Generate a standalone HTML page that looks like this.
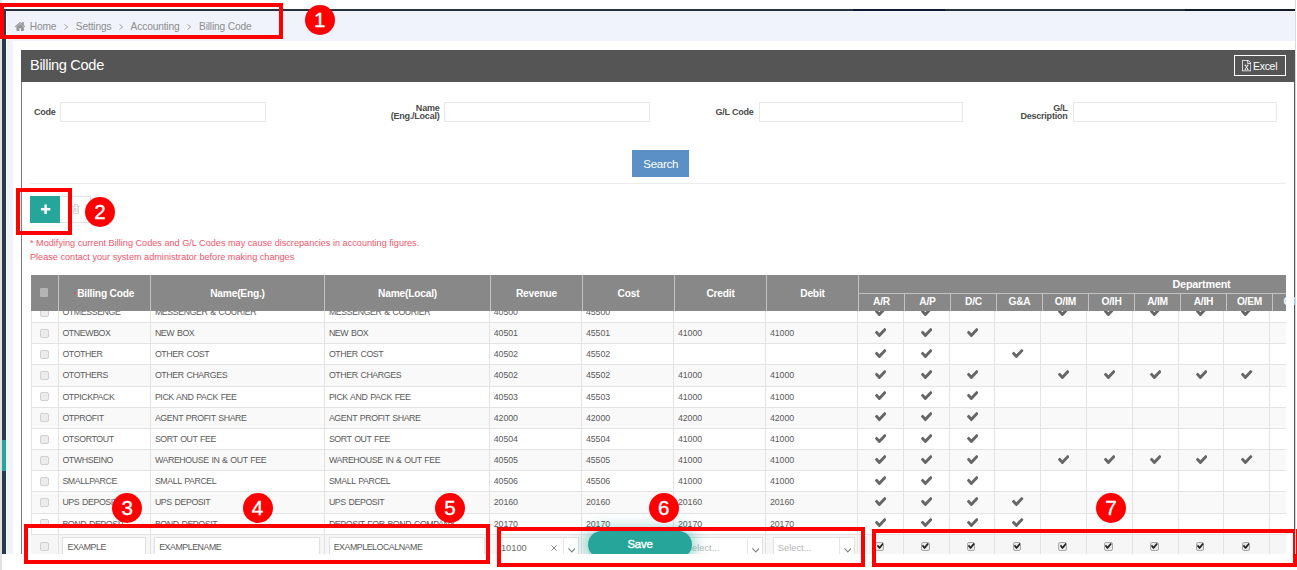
<!DOCTYPE html>
<html><head><meta charset="utf-8"><title>Billing Code</title>
<style>
html,body{margin:0;padding:0}
body{width:1297px;height:570px;position:relative;overflow:hidden;background:#fff;font-family:"Liberation Sans",sans-serif;}
.a{position:absolute}
#app{position:absolute;left:0;top:0;width:1297px;height:554px;overflow:hidden}
.t{position:absolute;white-space:nowrap;line-height:1}
.bc{font-size:10.2px;letter-spacing:-0.15px;color:#8d8d8d;top:22px}
.lbl{font-size:9px;letter-spacing:-0.22px;font-weight:bold;color:#4a4a4a;line-height:8.5px;text-align:right}
.inp{position:absolute;box-sizing:border-box;border:1px solid #e8e8e8;background:#fff;height:19.5px;top:102px}
.th{position:absolute;color:#fff;font-weight:bold;font-size:10.2px;letter-spacing:-0.2px;text-align:center;white-space:nowrap;line-height:1}
.row{position:absolute;left:30.5px;width:1255.5px;height:21.17px;box-sizing:border-box;border-bottom:1px solid #e3e3e3}
.c{position:absolute;top:0;height:21.17px;font-size:8.8px;letter-spacing:-0.4px;word-spacing:0.7px;color:#5a5a5a;line-height:21px;white-space:nowrap;overflow:hidden}
.vl{position:absolute;width:1px;background:#e3e3e3}
.cb{position:absolute;box-sizing:border-box;width:9px;height:9px;border:1px solid #cfcfcf;border-radius:2px;background:#ececec}
.einp{position:absolute;box-sizing:border-box;border:1px solid #e0e0e0;background:#fff;top:537.3px;height:22px;font-size:8.8px;letter-spacing:-0.45px;color:#5a5a5a;line-height:18.5px;padding-left:4.2px;white-space:nowrap}
.sel{position:absolute;box-sizing:border-box;border:1px solid #e0e0e0;background:#fff;top:537.3px;height:22px;font-size:9.3px;color:#b5b5b5;line-height:20px;white-space:nowrap}
.rr{position:absolute;box-sizing:border-box;border:4px solid #ff0000}
.circ{position:absolute;width:30px;height:30px;border-radius:50%;background:#ff0000;color:#fff;font-weight:normal;-webkit-text-stroke:0.35px #fff;font-size:20.6px;line-height:30.4px;text-align:center}
</style></head><body>
<div class="a" style="left:0;top:0;width:1.7px;height:570px;background:#e2e2e2"></div>
<div id="app">

<div class="a" style="left:6.6px;top:11px;width:1288.4px;height:543px;background:#f0f3fb"></div>
<div class="a" style="left:2px;top:9.2px;width:1293px;height:1.6px;background:#27313f"></div>
<div class="a" style="left:853px;top:9px;width:92px;height:2px;background:#0f1a33"></div>
<div class="a" style="left:1185px;top:9px;width:110px;height:2px;background:#131c2c"></div>
<div class="a" style="left:1.9px;top:9px;width:3.7px;height:545px;background:#2c394c"></div>
<div class="a" style="left:1.9px;top:440px;width:3.7px;height:31px;background:#26a69a"></div>
<div class="a" style="left:1295px;top:0;width:1.2px;height:554px;background:#dadada;z-index:3"></div>
<svg style="position:absolute;left:15px;top:21.7px;width:10.3px;height:8.9px;" viewBox="90 253 1612 1283" preserveAspectRatio="none"><path fill="#969696" d="M1472 992v480q0 26-19 45t-45 19h-384v-384h-256v384h-384q-26 0-45-19t-19-45v-480q0-1 .5-3t.5-3l575-474 575 474q1 2 1 6zm223-69l-62 74q-8 9-21 11h-3q-13 0-21-7l-692-577-692 577q-12 8-24 7-13-2-21-11l-62-74q-8-10-7-23.500t11-21.500l719-599q32-26 76-26t76 26l244 204v-195q0-14 9-23t23-9h192q14 0 23 9t9 23v408l219 182q10 8 11 21.500t-7 23.500z"/></svg>
<div class="t bc" style="left:29.7px">Home</div>
<svg class="a" style="left:63.9px;top:24px;width:4.4px;height:5.8px" viewBox="0 0 4.4 5.8"><path d="M0.5 0.3L3.7 2.9L0.5 5.5" stroke="#999" stroke-width="0.9" fill="none"/></svg>
<div class="t bc" style="left:75.8px">Settings</div>
<svg class="a" style="left:118.5px;top:24px;width:4.4px;height:5.8px" viewBox="0 0 4.4 5.8"><path d="M0.5 0.3L3.7 2.9L0.5 5.5" stroke="#999" stroke-width="0.9" fill="none"/></svg>
<div class="t bc" style="left:130.6px">Accounting</div>
<svg class="a" style="left:187.3px;top:24px;width:4.4px;height:5.8px" viewBox="0 0 4.4 5.8"><path d="M0.5 0.3L3.7 2.9L0.5 5.5" stroke="#999" stroke-width="0.9" fill="none"/></svg>
<div class="t bc" style="left:199px">Billing Code</div>
<div class="a" style="left:13px;top:41px;width:1284px;height:520px;background:#fff"></div>
<div class="a" style="left:21px;top:50px;width:1274px;height:520px;box-sizing:border-box;border:1px solid #555;border-left-color:#7a7a7a;background:#fff"></div>
<div class="a" style="left:21px;top:50px;width:1274px;height:32px;background:#555"></div>
<div class="t" style="left:30px;top:57.5px;font-size:14.6px;letter-spacing:-0.33px;color:#fff">Billing Code</div>
<div class="a" style="left:1234px;top:55px;width:52px;height:21px;box-sizing:border-box;border:1px solid #fff"></div>
<svg style="position:absolute;left:1242px;top:60.3px;width:9.2px;height:11.3px;" viewBox="128 0 1536 1792" preserveAspectRatio="none"><path fill="#fff" d="M1596 380q28 28 48 76t20 88v1152q0 40-28 68t-68 28h-1344q-40 0-68-28t-28-68v-1600q0-40 28-68t68-28h896q40 0 88 20t76 48zm-444-244v376h376q-10-29-22-41l-313-313q-12-12-41-22zm384 1528v-1024h-416q-40 0-68-28t-28-68v-416h-768v1536h1280zm-979-234v106h281v-106h-75l103-161q5-7 10-16.500t7.500-13.500 3.500-4h2q1 4 5 10 2 4 4.500 7.500t6 8 6.500 8.500l107 161h-76v106h291v-106h-68l-192-273 195-282h67v-107h-279v107h74l-103 159q-4 7-10 16.500t-9 13.500l-2 3h-2q-1-4-5-10-6-11-17-23l-106-159h76v-107h-290v107h68l189 272-194 283h-68z"/></svg>
<div class="t" style="left:1253px;top:60.7px;font-size:10.5px;letter-spacing:-0.3px;color:#fff">Excel</div>
<div class="t lbl" style="left:34px;top:108px;text-align:left">Code</div>
<div class="inp" style="left:60px;width:205.5px"></div>
<div class="t lbl" style="left:340px;width:99.5px;top:103.5px">Name<br>(Eng./Local)</div>
<div class="inp" style="left:444px;width:206px"></div>
<div class="t lbl" style="left:654px;width:99.5px;top:108px">G/L Code</div>
<div class="inp" style="left:758.5px;width:204.5px"></div>
<div class="t lbl" style="left:968px;width:99.5px;top:103.5px">G/L<br>Description</div>
<div class="inp" style="left:1072.5px;width:204.5px"></div>
<div class="a" style="left:632px;top:150.4px;width:57px;height:26.6px;background:#5b90c6"></div>
<div class="t" style="left:632px;width:57.5px;text-align:center;top:158px;font-size:11.6px;letter-spacing:-0.3px;color:#fff">Search</div>
<div class="a" style="left:30px;top:183px;width:1256px;height:1px;background:#ececec"></div>
<div class="a" style="left:60px;top:196px;width:31px;height:26.5px;box-sizing:border-box;border:1px solid #e2e2e2;border-left:0;background:#fff"></div>
<svg style="position:absolute;left:72.2px;top:204px;width:7.6px;height:10px;" viewBox="192 128 1408 1536" preserveAspectRatio="none"><path fill="#c6c6c6" d="M704 736v576q0 14-9 23t-23 9h-64q-14 0-23-9t-9-23v-576q0-14 9-23t23-9h64q14 0 23 9t9 23zm256 0v576q0 14-9 23t-23 9h-64q-14 0-23-9t-9-23v-576q0-14 9-23t23-9h64q14 0 23 9t9 23zm256 0v576q0 14-9 23t-23 9h-64q-14 0-23-9t-9-23v-576q0-14 9-23t23-9h64q14 0 23 9t9 23zm128 724v-948h-896v948q0 22 7 40.500t14.500 27 10.500 8.500h832q3 0 10.500-8.500t14.500-27 7-40.500zm-672-1076h448l-48-117q-7-9-17-11h-317q-10 2-17 11zm928 32v64q0 14-9 23t-23 9h-96v948q0 83-47 143.500t-113 60.500h-832q-66 0-113-58.500t-47-141.500v-952h-96q-14 0-23-9t-9-23v-64q0-14 9-23t23-9h309l70-167q15-37 54-63t79-26h320q40 0 79 26t54 63l70 167h309q14 0 23 9t9 23z"/></svg>
<div class="a" style="left:30px;top:196px;width:30px;height:26.5px;background:#26a69a"></div>
<svg class="a" style="left:38px;top:202px;width:15px;height:15px" viewBox="0 0 15 15"><path d="M2.9 7.2H12.3M7.6 2.5V11.9" stroke="#fff" stroke-width="2.5" fill="none"/></svg>
<div class="t" style="left:30px;top:239px;font-size:9.13px;color:#f2566b">* Modifying current Billing Codes and G/L Codes may cause discrepancies in accounting figures.</div>
<div class="t" style="left:30px;top:253px;font-size:9.13px;color:#f2566b">Please contact your system administrator before making changes</div>
<div class="row" style="top:301.93px;background:#fff">
<div class="cb" style="left:9.2px;top:5.7px"></div>
<div class="c" style="left:31.9px;width:87.3px">OTMESSENGE</div>
<div class="c" style="left:124.4px;width:168.8px">MESSENGER &amp; COURIER</div>
<div class="c" style="left:298.4px;width:159.7px">MESSENGER &amp; COURIER</div>
<div class="c" style="left:463.3px;width:87.0px;letter-spacing:-0.1px">40500</div>
<div class="c" style="left:555.5px;width:86.8px;letter-spacing:-0.1px">45500</div>
<svg style="position:absolute;left:844.5px;top:4.6px;width:11.4px;height:9.2px;" viewBox="121 334 1550 1188" preserveAspectRatio="none"><path fill="#666" d="M1671 566q0 40-28 68l-724 724-136 136q-28 28-68 28t-68-28l-136-136-362-362q-28-28-28-68t28-68l136-136q28-28 68-28t68 28l294 295 656-657q28-28 68-28t68 28l136 136q28 28 28 68z"/></svg>
<svg style="position:absolute;left:890.2px;top:4.6px;width:11.4px;height:9.2px;" viewBox="121 334 1550 1188" preserveAspectRatio="none"><path fill="#666" d="M1671 566q0 40-28 68l-724 724-136 136q-28 28-68 28t-68-28l-136-136-362-362q-28-28-28-68t28-68l136-136q28-28 68-28t68 28l294 295 656-657q28-28 68-28t68 28l136 136q28 28 28 68z"/></svg>
<svg style="position:absolute;left:1027.6px;top:4.6px;width:11.4px;height:9.2px;" viewBox="121 334 1550 1188" preserveAspectRatio="none"><path fill="#666" d="M1671 566q0 40-28 68l-724 724-136 136q-28 28-68 28t-68-28l-136-136-362-362q-28-28-28-68t28-68l136-136q28-28 68-28t68 28l294 295 656-657q28-28 68-28t68 28l136 136q28 28 28 68z"/></svg>
<svg style="position:absolute;left:1073.4px;top:4.6px;width:11.4px;height:9.2px;" viewBox="121 334 1550 1188" preserveAspectRatio="none"><path fill="#666" d="M1671 566q0 40-28 68l-724 724-136 136q-28 28-68 28t-68-28l-136-136-362-362q-28-28-28-68t28-68l136-136q28-28 68-28t68 28l294 295 656-657q28-28 68-28t68 28l136 136q28 28 28 68z"/></svg>
<svg style="position:absolute;left:1119.2px;top:4.6px;width:11.4px;height:9.2px;" viewBox="121 334 1550 1188" preserveAspectRatio="none"><path fill="#666" d="M1671 566q0 40-28 68l-724 724-136 136q-28 28-68 28t-68-28l-136-136-362-362q-28-28-28-68t28-68l136-136q28-28 68-28t68 28l294 295 656-657q28-28 68-28t68 28l136 136q28 28 28 68z"/></svg>
<svg style="position:absolute;left:1165.0px;top:4.6px;width:11.4px;height:9.2px;" viewBox="121 334 1550 1188" preserveAspectRatio="none"><path fill="#666" d="M1671 566q0 40-28 68l-724 724-136 136q-28 28-68 28t-68-28l-136-136-362-362q-28-28-28-68t28-68l136-136q28-28 68-28t68 28l294 295 656-657q28-28 68-28t68 28l136 136q28 28 28 68z"/></svg>
<svg style="position:absolute;left:1210.8px;top:4.6px;width:11.4px;height:9.2px;" viewBox="121 334 1550 1188" preserveAspectRatio="none"><path fill="#666" d="M1671 566q0 40-28 68l-724 724-136 136q-28 28-68 28t-68-28l-136-136-362-362q-28-28-28-68t28-68l136-136q28-28 68-28t68 28l294 295 656-657q28-28 68-28t68 28l136 136q28 28 28 68z"/></svg>
</div>
<div class="row" style="top:323.10px;background:#f9f9f9">
<div class="cb" style="left:9.2px;top:5.7px"></div>
<div class="c" style="left:31.9px;width:87.3px">OTNEWBOX</div>
<div class="c" style="left:124.4px;width:168.8px">NEW BOX</div>
<div class="c" style="left:298.4px;width:159.7px">NEW BOX</div>
<div class="c" style="left:463.3px;width:87.0px;letter-spacing:-0.1px">40501</div>
<div class="c" style="left:555.5px;width:86.8px;letter-spacing:-0.1px">45501</div>
<div class="c" style="left:647.5px;width:86.8px;letter-spacing:-0.1px">41000</div>
<div class="c" style="left:739.5px;width:86.8px;letter-spacing:-0.1px">41000</div>
<svg style="position:absolute;left:844.5px;top:4.6px;width:11.4px;height:9.2px;" viewBox="121 334 1550 1188" preserveAspectRatio="none"><path fill="#666" d="M1671 566q0 40-28 68l-724 724-136 136q-28 28-68 28t-68-28l-136-136-362-362q-28-28-28-68t28-68l136-136q28-28 68-28t68 28l294 295 656-657q28-28 68-28t68 28l136 136q28 28 28 68z"/></svg>
<svg style="position:absolute;left:890.2px;top:4.6px;width:11.4px;height:9.2px;" viewBox="121 334 1550 1188" preserveAspectRatio="none"><path fill="#666" d="M1671 566q0 40-28 68l-724 724-136 136q-28 28-68 28t-68-28l-136-136-362-362q-28-28-28-68t28-68l136-136q28-28 68-28t68 28l294 295 656-657q28-28 68-28t68 28l136 136q28 28 28 68z"/></svg>
<svg style="position:absolute;left:936.0px;top:4.6px;width:11.4px;height:9.2px;" viewBox="121 334 1550 1188" preserveAspectRatio="none"><path fill="#666" d="M1671 566q0 40-28 68l-724 724-136 136q-28 28-68 28t-68-28l-136-136-362-362q-28-28-28-68t28-68l136-136q28-28 68-28t68 28l294 295 656-657q28-28 68-28t68 28l136 136q28 28 28 68z"/></svg>
</div>
<div class="row" style="top:344.27px;background:#fff">
<div class="cb" style="left:9.2px;top:5.7px"></div>
<div class="c" style="left:31.9px;width:87.3px">OTOTHER</div>
<div class="c" style="left:124.4px;width:168.8px">OTHER COST</div>
<div class="c" style="left:298.4px;width:159.7px">OTHER COST</div>
<div class="c" style="left:463.3px;width:87.0px;letter-spacing:-0.1px">40502</div>
<div class="c" style="left:555.5px;width:86.8px;letter-spacing:-0.1px">45502</div>
<svg style="position:absolute;left:844.5px;top:4.6px;width:11.4px;height:9.2px;" viewBox="121 334 1550 1188" preserveAspectRatio="none"><path fill="#666" d="M1671 566q0 40-28 68l-724 724-136 136q-28 28-68 28t-68-28l-136-136-362-362q-28-28-28-68t28-68l136-136q28-28 68-28t68 28l294 295 656-657q28-28 68-28t68 28l136 136q28 28 28 68z"/></svg>
<svg style="position:absolute;left:890.2px;top:4.6px;width:11.4px;height:9.2px;" viewBox="121 334 1550 1188" preserveAspectRatio="none"><path fill="#666" d="M1671 566q0 40-28 68l-724 724-136 136q-28 28-68 28t-68-28l-136-136-362-362q-28-28-28-68t28-68l136-136q28-28 68-28t68 28l294 295 656-657q28-28 68-28t68 28l136 136q28 28 28 68z"/></svg>
<svg style="position:absolute;left:981.8px;top:4.6px;width:11.4px;height:9.2px;" viewBox="121 334 1550 1188" preserveAspectRatio="none"><path fill="#666" d="M1671 566q0 40-28 68l-724 724-136 136q-28 28-68 28t-68-28l-136-136-362-362q-28-28-28-68t28-68l136-136q28-28 68-28t68 28l294 295 656-657q28-28 68-28t68 28l136 136q28 28 28 68z"/></svg>
</div>
<div class="row" style="top:365.44px;background:#f9f9f9">
<div class="cb" style="left:9.2px;top:5.7px"></div>
<div class="c" style="left:31.9px;width:87.3px">OTOTHERS</div>
<div class="c" style="left:124.4px;width:168.8px">OTHER CHARGES</div>
<div class="c" style="left:298.4px;width:159.7px">OTHER CHARGES</div>
<div class="c" style="left:463.3px;width:87.0px;letter-spacing:-0.1px">40502</div>
<div class="c" style="left:555.5px;width:86.8px;letter-spacing:-0.1px">45502</div>
<div class="c" style="left:647.5px;width:86.8px;letter-spacing:-0.1px">41000</div>
<div class="c" style="left:739.5px;width:86.8px;letter-spacing:-0.1px">41000</div>
<svg style="position:absolute;left:844.5px;top:4.6px;width:11.4px;height:9.2px;" viewBox="121 334 1550 1188" preserveAspectRatio="none"><path fill="#666" d="M1671 566q0 40-28 68l-724 724-136 136q-28 28-68 28t-68-28l-136-136-362-362q-28-28-28-68t28-68l136-136q28-28 68-28t68 28l294 295 656-657q28-28 68-28t68 28l136 136q28 28 28 68z"/></svg>
<svg style="position:absolute;left:890.2px;top:4.6px;width:11.4px;height:9.2px;" viewBox="121 334 1550 1188" preserveAspectRatio="none"><path fill="#666" d="M1671 566q0 40-28 68l-724 724-136 136q-28 28-68 28t-68-28l-136-136-362-362q-28-28-28-68t28-68l136-136q28-28 68-28t68 28l294 295 656-657q28-28 68-28t68 28l136 136q28 28 28 68z"/></svg>
<svg style="position:absolute;left:936.0px;top:4.6px;width:11.4px;height:9.2px;" viewBox="121 334 1550 1188" preserveAspectRatio="none"><path fill="#666" d="M1671 566q0 40-28 68l-724 724-136 136q-28 28-68 28t-68-28l-136-136-362-362q-28-28-28-68t28-68l136-136q28-28 68-28t68 28l294 295 656-657q28-28 68-28t68 28l136 136q28 28 28 68z"/></svg>
<svg style="position:absolute;left:1027.6px;top:4.6px;width:11.4px;height:9.2px;" viewBox="121 334 1550 1188" preserveAspectRatio="none"><path fill="#666" d="M1671 566q0 40-28 68l-724 724-136 136q-28 28-68 28t-68-28l-136-136-362-362q-28-28-28-68t28-68l136-136q28-28 68-28t68 28l294 295 656-657q28-28 68-28t68 28l136 136q28 28 28 68z"/></svg>
<svg style="position:absolute;left:1073.4px;top:4.6px;width:11.4px;height:9.2px;" viewBox="121 334 1550 1188" preserveAspectRatio="none"><path fill="#666" d="M1671 566q0 40-28 68l-724 724-136 136q-28 28-68 28t-68-28l-136-136-362-362q-28-28-28-68t28-68l136-136q28-28 68-28t68 28l294 295 656-657q28-28 68-28t68 28l136 136q28 28 28 68z"/></svg>
<svg style="position:absolute;left:1119.2px;top:4.6px;width:11.4px;height:9.2px;" viewBox="121 334 1550 1188" preserveAspectRatio="none"><path fill="#666" d="M1671 566q0 40-28 68l-724 724-136 136q-28 28-68 28t-68-28l-136-136-362-362q-28-28-28-68t28-68l136-136q28-28 68-28t68 28l294 295 656-657q28-28 68-28t68 28l136 136q28 28 28 68z"/></svg>
<svg style="position:absolute;left:1165.0px;top:4.6px;width:11.4px;height:9.2px;" viewBox="121 334 1550 1188" preserveAspectRatio="none"><path fill="#666" d="M1671 566q0 40-28 68l-724 724-136 136q-28 28-68 28t-68-28l-136-136-362-362q-28-28-28-68t28-68l136-136q28-28 68-28t68 28l294 295 656-657q28-28 68-28t68 28l136 136q28 28 28 68z"/></svg>
<svg style="position:absolute;left:1210.8px;top:4.6px;width:11.4px;height:9.2px;" viewBox="121 334 1550 1188" preserveAspectRatio="none"><path fill="#666" d="M1671 566q0 40-28 68l-724 724-136 136q-28 28-68 28t-68-28l-136-136-362-362q-28-28-28-68t28-68l136-136q28-28 68-28t68 28l294 295 656-657q28-28 68-28t68 28l136 136q28 28 28 68z"/></svg>
</div>
<div class="row" style="top:386.61px;background:#fff">
<div class="cb" style="left:9.2px;top:5.7px"></div>
<div class="c" style="left:31.9px;width:87.3px">OTPICKPACK</div>
<div class="c" style="left:124.4px;width:168.8px">PICK AND PACK FEE</div>
<div class="c" style="left:298.4px;width:159.7px">PICK AND PACK FEE</div>
<div class="c" style="left:463.3px;width:87.0px;letter-spacing:-0.1px">40503</div>
<div class="c" style="left:555.5px;width:86.8px;letter-spacing:-0.1px">45503</div>
<div class="c" style="left:647.5px;width:86.8px;letter-spacing:-0.1px">41000</div>
<div class="c" style="left:739.5px;width:86.8px;letter-spacing:-0.1px">41000</div>
<svg style="position:absolute;left:844.5px;top:4.6px;width:11.4px;height:9.2px;" viewBox="121 334 1550 1188" preserveAspectRatio="none"><path fill="#666" d="M1671 566q0 40-28 68l-724 724-136 136q-28 28-68 28t-68-28l-136-136-362-362q-28-28-28-68t28-68l136-136q28-28 68-28t68 28l294 295 656-657q28-28 68-28t68 28l136 136q28 28 28 68z"/></svg>
<svg style="position:absolute;left:890.2px;top:4.6px;width:11.4px;height:9.2px;" viewBox="121 334 1550 1188" preserveAspectRatio="none"><path fill="#666" d="M1671 566q0 40-28 68l-724 724-136 136q-28 28-68 28t-68-28l-136-136-362-362q-28-28-28-68t28-68l136-136q28-28 68-28t68 28l294 295 656-657q28-28 68-28t68 28l136 136q28 28 28 68z"/></svg>
<svg style="position:absolute;left:936.0px;top:4.6px;width:11.4px;height:9.2px;" viewBox="121 334 1550 1188" preserveAspectRatio="none"><path fill="#666" d="M1671 566q0 40-28 68l-724 724-136 136q-28 28-68 28t-68-28l-136-136-362-362q-28-28-28-68t28-68l136-136q28-28 68-28t68 28l294 295 656-657q28-28 68-28t68 28l136 136q28 28 28 68z"/></svg>
</div>
<div class="row" style="top:407.78px;background:#f9f9f9">
<div class="cb" style="left:9.2px;top:5.7px"></div>
<div class="c" style="left:31.9px;width:87.3px">OTPROFIT</div>
<div class="c" style="left:124.4px;width:168.8px">AGENT PROFIT SHARE</div>
<div class="c" style="left:298.4px;width:159.7px">AGENT PROFIT SHARE</div>
<div class="c" style="left:463.3px;width:87.0px;letter-spacing:-0.1px">42000</div>
<div class="c" style="left:555.5px;width:86.8px;letter-spacing:-0.1px">42000</div>
<div class="c" style="left:647.5px;width:86.8px;letter-spacing:-0.1px">42000</div>
<div class="c" style="left:739.5px;width:86.8px;letter-spacing:-0.1px">42000</div>
<svg style="position:absolute;left:844.5px;top:4.6px;width:11.4px;height:9.2px;" viewBox="121 334 1550 1188" preserveAspectRatio="none"><path fill="#666" d="M1671 566q0 40-28 68l-724 724-136 136q-28 28-68 28t-68-28l-136-136-362-362q-28-28-28-68t28-68l136-136q28-28 68-28t68 28l294 295 656-657q28-28 68-28t68 28l136 136q28 28 28 68z"/></svg>
<svg style="position:absolute;left:890.2px;top:4.6px;width:11.4px;height:9.2px;" viewBox="121 334 1550 1188" preserveAspectRatio="none"><path fill="#666" d="M1671 566q0 40-28 68l-724 724-136 136q-28 28-68 28t-68-28l-136-136-362-362q-28-28-28-68t28-68l136-136q28-28 68-28t68 28l294 295 656-657q28-28 68-28t68 28l136 136q28 28 28 68z"/></svg>
<svg style="position:absolute;left:936.0px;top:4.6px;width:11.4px;height:9.2px;" viewBox="121 334 1550 1188" preserveAspectRatio="none"><path fill="#666" d="M1671 566q0 40-28 68l-724 724-136 136q-28 28-68 28t-68-28l-136-136-362-362q-28-28-28-68t28-68l136-136q28-28 68-28t68 28l294 295 656-657q28-28 68-28t68 28l136 136q28 28 28 68z"/></svg>
</div>
<div class="row" style="top:428.95px;background:#fff">
<div class="cb" style="left:9.2px;top:5.7px"></div>
<div class="c" style="left:31.9px;width:87.3px">OTSORTOUT</div>
<div class="c" style="left:124.4px;width:168.8px">SORT OUT FEE</div>
<div class="c" style="left:298.4px;width:159.7px">SORT OUT FEE</div>
<div class="c" style="left:463.3px;width:87.0px;letter-spacing:-0.1px">40504</div>
<div class="c" style="left:555.5px;width:86.8px;letter-spacing:-0.1px">45504</div>
<div class="c" style="left:647.5px;width:86.8px;letter-spacing:-0.1px">41000</div>
<div class="c" style="left:739.5px;width:86.8px;letter-spacing:-0.1px">41000</div>
<svg style="position:absolute;left:844.5px;top:4.6px;width:11.4px;height:9.2px;" viewBox="121 334 1550 1188" preserveAspectRatio="none"><path fill="#666" d="M1671 566q0 40-28 68l-724 724-136 136q-28 28-68 28t-68-28l-136-136-362-362q-28-28-28-68t28-68l136-136q28-28 68-28t68 28l294 295 656-657q28-28 68-28t68 28l136 136q28 28 28 68z"/></svg>
<svg style="position:absolute;left:890.2px;top:4.6px;width:11.4px;height:9.2px;" viewBox="121 334 1550 1188" preserveAspectRatio="none"><path fill="#666" d="M1671 566q0 40-28 68l-724 724-136 136q-28 28-68 28t-68-28l-136-136-362-362q-28-28-28-68t28-68l136-136q28-28 68-28t68 28l294 295 656-657q28-28 68-28t68 28l136 136q28 28 28 68z"/></svg>
<svg style="position:absolute;left:936.0px;top:4.6px;width:11.4px;height:9.2px;" viewBox="121 334 1550 1188" preserveAspectRatio="none"><path fill="#666" d="M1671 566q0 40-28 68l-724 724-136 136q-28 28-68 28t-68-28l-136-136-362-362q-28-28-28-68t28-68l136-136q28-28 68-28t68 28l294 295 656-657q28-28 68-28t68 28l136 136q28 28 28 68z"/></svg>
</div>
<div class="row" style="top:450.12px;background:#f9f9f9">
<div class="cb" style="left:9.2px;top:5.7px"></div>
<div class="c" style="left:31.9px;width:87.3px">OTWHSEINO</div>
<div class="c" style="left:124.4px;width:168.8px">WAREHOUSE IN &amp; OUT FEE</div>
<div class="c" style="left:298.4px;width:159.7px">WAREHOUSE IN &amp; OUT FEE</div>
<div class="c" style="left:463.3px;width:87.0px;letter-spacing:-0.1px">40505</div>
<div class="c" style="left:555.5px;width:86.8px;letter-spacing:-0.1px">45505</div>
<div class="c" style="left:647.5px;width:86.8px;letter-spacing:-0.1px">41000</div>
<div class="c" style="left:739.5px;width:86.8px;letter-spacing:-0.1px">41000</div>
<svg style="position:absolute;left:844.5px;top:4.6px;width:11.4px;height:9.2px;" viewBox="121 334 1550 1188" preserveAspectRatio="none"><path fill="#666" d="M1671 566q0 40-28 68l-724 724-136 136q-28 28-68 28t-68-28l-136-136-362-362q-28-28-28-68t28-68l136-136q28-28 68-28t68 28l294 295 656-657q28-28 68-28t68 28l136 136q28 28 28 68z"/></svg>
<svg style="position:absolute;left:890.2px;top:4.6px;width:11.4px;height:9.2px;" viewBox="121 334 1550 1188" preserveAspectRatio="none"><path fill="#666" d="M1671 566q0 40-28 68l-724 724-136 136q-28 28-68 28t-68-28l-136-136-362-362q-28-28-28-68t28-68l136-136q28-28 68-28t68 28l294 295 656-657q28-28 68-28t68 28l136 136q28 28 28 68z"/></svg>
<svg style="position:absolute;left:936.0px;top:4.6px;width:11.4px;height:9.2px;" viewBox="121 334 1550 1188" preserveAspectRatio="none"><path fill="#666" d="M1671 566q0 40-28 68l-724 724-136 136q-28 28-68 28t-68-28l-136-136-362-362q-28-28-28-68t28-68l136-136q28-28 68-28t68 28l294 295 656-657q28-28 68-28t68 28l136 136q28 28 28 68z"/></svg>
<svg style="position:absolute;left:1027.6px;top:4.6px;width:11.4px;height:9.2px;" viewBox="121 334 1550 1188" preserveAspectRatio="none"><path fill="#666" d="M1671 566q0 40-28 68l-724 724-136 136q-28 28-68 28t-68-28l-136-136-362-362q-28-28-28-68t28-68l136-136q28-28 68-28t68 28l294 295 656-657q28-28 68-28t68 28l136 136q28 28 28 68z"/></svg>
<svg style="position:absolute;left:1073.4px;top:4.6px;width:11.4px;height:9.2px;" viewBox="121 334 1550 1188" preserveAspectRatio="none"><path fill="#666" d="M1671 566q0 40-28 68l-724 724-136 136q-28 28-68 28t-68-28l-136-136-362-362q-28-28-28-68t28-68l136-136q28-28 68-28t68 28l294 295 656-657q28-28 68-28t68 28l136 136q28 28 28 68z"/></svg>
<svg style="position:absolute;left:1119.2px;top:4.6px;width:11.4px;height:9.2px;" viewBox="121 334 1550 1188" preserveAspectRatio="none"><path fill="#666" d="M1671 566q0 40-28 68l-724 724-136 136q-28 28-68 28t-68-28l-136-136-362-362q-28-28-28-68t28-68l136-136q28-28 68-28t68 28l294 295 656-657q28-28 68-28t68 28l136 136q28 28 28 68z"/></svg>
<svg style="position:absolute;left:1165.0px;top:4.6px;width:11.4px;height:9.2px;" viewBox="121 334 1550 1188" preserveAspectRatio="none"><path fill="#666" d="M1671 566q0 40-28 68l-724 724-136 136q-28 28-68 28t-68-28l-136-136-362-362q-28-28-28-68t28-68l136-136q28-28 68-28t68 28l294 295 656-657q28-28 68-28t68 28l136 136q28 28 28 68z"/></svg>
<svg style="position:absolute;left:1210.8px;top:4.6px;width:11.4px;height:9.2px;" viewBox="121 334 1550 1188" preserveAspectRatio="none"><path fill="#666" d="M1671 566q0 40-28 68l-724 724-136 136q-28 28-68 28t-68-28l-136-136-362-362q-28-28-28-68t28-68l136-136q28-28 68-28t68 28l294 295 656-657q28-28 68-28t68 28l136 136q28 28 28 68z"/></svg>
</div>
<div class="row" style="top:471.29px;background:#fff">
<div class="cb" style="left:9.2px;top:5.7px"></div>
<div class="c" style="left:31.9px;width:87.3px">SMALLPARCE</div>
<div class="c" style="left:124.4px;width:168.8px">SMALL PARCEL</div>
<div class="c" style="left:298.4px;width:159.7px">SMALL PARCEL</div>
<div class="c" style="left:463.3px;width:87.0px;letter-spacing:-0.1px">40506</div>
<div class="c" style="left:555.5px;width:86.8px;letter-spacing:-0.1px">45506</div>
<div class="c" style="left:647.5px;width:86.8px;letter-spacing:-0.1px">41000</div>
<div class="c" style="left:739.5px;width:86.8px;letter-spacing:-0.1px">41000</div>
<svg style="position:absolute;left:844.5px;top:4.6px;width:11.4px;height:9.2px;" viewBox="121 334 1550 1188" preserveAspectRatio="none"><path fill="#666" d="M1671 566q0 40-28 68l-724 724-136 136q-28 28-68 28t-68-28l-136-136-362-362q-28-28-28-68t28-68l136-136q28-28 68-28t68 28l294 295 656-657q28-28 68-28t68 28l136 136q28 28 28 68z"/></svg>
<svg style="position:absolute;left:890.2px;top:4.6px;width:11.4px;height:9.2px;" viewBox="121 334 1550 1188" preserveAspectRatio="none"><path fill="#666" d="M1671 566q0 40-28 68l-724 724-136 136q-28 28-68 28t-68-28l-136-136-362-362q-28-28-28-68t28-68l136-136q28-28 68-28t68 28l294 295 656-657q28-28 68-28t68 28l136 136q28 28 28 68z"/></svg>
<svg style="position:absolute;left:936.0px;top:4.6px;width:11.4px;height:9.2px;" viewBox="121 334 1550 1188" preserveAspectRatio="none"><path fill="#666" d="M1671 566q0 40-28 68l-724 724-136 136q-28 28-68 28t-68-28l-136-136-362-362q-28-28-28-68t28-68l136-136q28-28 68-28t68 28l294 295 656-657q28-28 68-28t68 28l136 136q28 28 28 68z"/></svg>
</div>
<div class="row" style="top:492.46px;background:#f9f9f9">
<div class="cb" style="left:9.2px;top:5.7px"></div>
<div class="c" style="left:31.9px;width:87.3px">UPS DEPOSIT</div>
<div class="c" style="left:124.4px;width:168.8px">UPS DEPOSIT</div>
<div class="c" style="left:298.4px;width:159.7px">UPS DEPOSIT</div>
<div class="c" style="left:463.3px;width:87.0px;letter-spacing:-0.1px">20160</div>
<div class="c" style="left:555.5px;width:86.8px;letter-spacing:-0.1px">20160</div>
<div class="c" style="left:647.5px;width:86.8px;letter-spacing:-0.1px">20160</div>
<div class="c" style="left:739.5px;width:86.8px;letter-spacing:-0.1px">20160</div>
<svg style="position:absolute;left:844.5px;top:4.6px;width:11.4px;height:9.2px;" viewBox="121 334 1550 1188" preserveAspectRatio="none"><path fill="#666" d="M1671 566q0 40-28 68l-724 724-136 136q-28 28-68 28t-68-28l-136-136-362-362q-28-28-28-68t28-68l136-136q28-28 68-28t68 28l294 295 656-657q28-28 68-28t68 28l136 136q28 28 28 68z"/></svg>
<svg style="position:absolute;left:890.2px;top:4.6px;width:11.4px;height:9.2px;" viewBox="121 334 1550 1188" preserveAspectRatio="none"><path fill="#666" d="M1671 566q0 40-28 68l-724 724-136 136q-28 28-68 28t-68-28l-136-136-362-362q-28-28-28-68t28-68l136-136q28-28 68-28t68 28l294 295 656-657q28-28 68-28t68 28l136 136q28 28 28 68z"/></svg>
<svg style="position:absolute;left:936.0px;top:4.6px;width:11.4px;height:9.2px;" viewBox="121 334 1550 1188" preserveAspectRatio="none"><path fill="#666" d="M1671 566q0 40-28 68l-724 724-136 136q-28 28-68 28t-68-28l-136-136-362-362q-28-28-28-68t28-68l136-136q28-28 68-28t68 28l294 295 656-657q28-28 68-28t68 28l136 136q28 28 28 68z"/></svg>
<svg style="position:absolute;left:981.8px;top:4.6px;width:11.4px;height:9.2px;" viewBox="121 334 1550 1188" preserveAspectRatio="none"><path fill="#666" d="M1671 566q0 40-28 68l-724 724-136 136q-28 28-68 28t-68-28l-136-136-362-362q-28-28-28-68t28-68l136-136q28-28 68-28t68 28l294 295 656-657q28-28 68-28t68 28l136 136q28 28 28 68z"/></svg>
</div>
<div class="row" style="top:513.63px;background:#fff">
<div class="cb" style="left:9.2px;top:5.7px"></div>
<div class="c" style="left:31.9px;width:87.3px">BOND DEPOSIT</div>
<div class="c" style="left:124.4px;width:168.8px">BOND DEPOSIT</div>
<div class="c" style="left:298.4px;width:159.7px">DEPOSIT FOR BOND COMPANY</div>
<div class="c" style="left:463.3px;width:87.0px;letter-spacing:-0.1px">20170</div>
<div class="c" style="left:555.5px;width:86.8px;letter-spacing:-0.1px">20170</div>
<div class="c" style="left:647.5px;width:86.8px;letter-spacing:-0.1px">20170</div>
<div class="c" style="left:739.5px;width:86.8px;letter-spacing:-0.1px">20170</div>
<svg style="position:absolute;left:844.5px;top:4.6px;width:11.4px;height:9.2px;" viewBox="121 334 1550 1188" preserveAspectRatio="none"><path fill="#666" d="M1671 566q0 40-28 68l-724 724-136 136q-28 28-68 28t-68-28l-136-136-362-362q-28-28-28-68t28-68l136-136q28-28 68-28t68 28l294 295 656-657q28-28 68-28t68 28l136 136q28 28 28 68z"/></svg>
<svg style="position:absolute;left:890.2px;top:4.6px;width:11.4px;height:9.2px;" viewBox="121 334 1550 1188" preserveAspectRatio="none"><path fill="#666" d="M1671 566q0 40-28 68l-724 724-136 136q-28 28-68 28t-68-28l-136-136-362-362q-28-28-28-68t28-68l136-136q28-28 68-28t68 28l294 295 656-657q28-28 68-28t68 28l136 136q28 28 28 68z"/></svg>
<svg style="position:absolute;left:936.0px;top:4.6px;width:11.4px;height:9.2px;" viewBox="121 334 1550 1188" preserveAspectRatio="none"><path fill="#666" d="M1671 566q0 40-28 68l-724 724-136 136q-28 28-68 28t-68-28l-136-136-362-362q-28-28-28-68t28-68l136-136q28-28 68-28t68 28l294 295 656-657q28-28 68-28t68 28l136 136q28 28 28 68z"/></svg>
<svg style="position:absolute;left:981.8px;top:4.6px;width:11.4px;height:9.2px;" viewBox="121 334 1550 1188" preserveAspectRatio="none"><path fill="#666" d="M1671 566q0 40-28 68l-724 724-136 136q-28 28-68 28t-68-28l-136-136-362-362q-28-28-28-68t28-68l136-136q28-28 68-28t68 28l294 295 656-657q28-28 68-28t68 28l136 136q28 28 28 68z"/></svg>
</div>
<div class="vl" style="left:57.5px;top:311px;height:243px"></div>
<div class="vl" style="left:150.0px;top:311px;height:243px"></div>
<div class="vl" style="left:324.0px;top:311px;height:243px"></div>
<div class="vl" style="left:488.9px;top:311px;height:243px"></div>
<div class="vl" style="left:581.1px;top:311px;height:243px"></div>
<div class="vl" style="left:673.1px;top:311px;height:243px"></div>
<div class="vl" style="left:765.1px;top:311px;height:243px"></div>
<div class="vl" style="left:857.1px;top:311px;height:243px"></div>
<div class="vl" style="left:902.7px;top:311px;height:243px"></div>
<div class="vl" style="left:948.5px;top:311px;height:243px"></div>
<div class="vl" style="left:994.3px;top:311px;height:243px"></div>
<div class="vl" style="left:1040.1px;top:311px;height:243px"></div>
<div class="vl" style="left:1085.9px;top:311px;height:243px"></div>
<div class="vl" style="left:1131.7px;top:311px;height:243px"></div>
<div class="vl" style="left:1177.5px;top:311px;height:243px"></div>
<div class="vl" style="left:1223.3px;top:311px;height:243px"></div>
<div class="vl" style="left:1269.1px;top:311px;height:243px"></div>
<div class="vl" style="left:30.5px;top:311px;height:243px"></div>
<div class="vl" style="left:1285.5px;top:311px;height:243px"></div>
<div class="a" style="left:30.5px;top:534px;width:1255.5px;height:30px;background:#f6f6f6;border-top:1px solid #e3e3e3"></div>
<div class="vl" style="left:57.5px;top:534px;height:20px"></div>
<div class="vl" style="left:150.0px;top:534px;height:20px"></div>
<div class="vl" style="left:324.0px;top:534px;height:20px"></div>
<div class="vl" style="left:488.9px;top:534px;height:20px"></div>
<div class="vl" style="left:581.1px;top:534px;height:20px"></div>
<div class="vl" style="left:673.1px;top:534px;height:20px"></div>
<div class="vl" style="left:765.1px;top:534px;height:20px"></div>
<div class="vl" style="left:857.1px;top:534px;height:20px"></div>
<div class="vl" style="left:902.7px;top:534px;height:20px"></div>
<div class="vl" style="left:948.5px;top:534px;height:20px"></div>
<div class="vl" style="left:994.3px;top:534px;height:20px"></div>
<div class="vl" style="left:1040.1px;top:534px;height:20px"></div>
<div class="vl" style="left:1085.9px;top:534px;height:20px"></div>
<div class="vl" style="left:1131.7px;top:534px;height:20px"></div>
<div class="vl" style="left:1177.5px;top:534px;height:20px"></div>
<div class="vl" style="left:1223.3px;top:534px;height:20px"></div>
<div class="vl" style="left:1269.1px;top:534px;height:20px"></div>
<div class="cb" style="left:40px;top:541.8px"></div>
<div class="einp" style="left:62.3px;width:83.5px">EXAMPLE</div>
<div class="einp" style="left:154px;width:165.5px">EXAMPLENAME</div>
<div class="einp" style="left:328.5px;width:156px">EXAMPLELOCALNAME</div>
<div class="sel" style="left:496.5px;width:82.10000000000002px;color:#686868"><span style="position:absolute;left:3.4px;top:-0.6px">10100</span><svg style="position:absolute;left:53.90000000000002px;top:6.3px;width:6px;height:6px" viewBox="0 0 6 6"><path d="M0.3 0.3L5.7 5.7M5.7 0.3L0.3 5.7" stroke="#8e8e8e" stroke-width="1" fill="none"/></svg><div style="position:absolute;left:65.90000000000002px;top:0px;width:1px;height:21px;background:#e6e6e6"></div><svg style="position:absolute;left:70.10000000000002px;top:10px;width:7.6px;height:4.6px" viewBox="0 0 7.6 4.6"><path d="M0.4 0.4L3.8 3.9L7.2 0.4" stroke="#858585" stroke-width="1.1" fill="none"/></svg></div>
<div class="sel" style="left:588.5px;width:81.5px;color:#b5b5b5"><span style="position:absolute;left:4.3px;top:0px">Select...</span><div style="position:absolute;left:65.3px;top:0px;width:1px;height:21px;background:#e6e6e6"></div><svg style="position:absolute;left:69.5px;top:10px;width:7.6px;height:4.6px" viewBox="0 0 7.6 4.6"><path d="M0.4 0.4L3.8 3.9L7.2 0.4" stroke="#858585" stroke-width="1.1" fill="none"/></svg></div>
<div class="sel" style="left:680.5px;width:82.0px;color:#b5b5b5"><span style="position:absolute;left:4.3px;top:0px">Select...</span><div style="position:absolute;left:65.8px;top:0px;width:1px;height:21px;background:#e6e6e6"></div><svg style="position:absolute;left:70.0px;top:10px;width:7.6px;height:4.6px" viewBox="0 0 7.6 4.6"><path d="M0.4 0.4L3.8 3.9L7.2 0.4" stroke="#858585" stroke-width="1.1" fill="none"/></svg></div>
<div class="sel" style="left:772.5px;width:82.0px;color:#b5b5b5"><span style="position:absolute;left:4.3px;top:0px">Select...</span><div style="position:absolute;left:65.8px;top:0px;width:1px;height:21px;background:#e6e6e6"></div><svg style="position:absolute;left:70.0px;top:10px;width:7.6px;height:4.6px" viewBox="0 0 7.6 4.6"><path d="M0.4 0.4L3.8 3.9L7.2 0.4" stroke="#858585" stroke-width="1.1" fill="none"/></svg></div>
<div class="a" style="left:875.2px;top:541.9px;width:8.8px;height:8.8px;box-sizing:border-box;border:1px solid #a8a8a8;border-radius:2px;background:#e9e9e9"></div>
<svg class="a" style="left:876.5px;top:543.2px;width:6.6px;height:6px" viewBox="121 334 1550 1188" preserveAspectRatio="none"><path fill="#222" d="M1671 566q0 40-28 68l-724 724-136 136q-28 28-68 28t-68-28l-136-136-362-362q-28-28-28-68t28-68l136-136q28-28 68-28t68 28l294 295 656-657q28-28 68-28t68 28l136 136q28 28 28 68z"/></svg>
<div class="a" style="left:920.9px;top:541.9px;width:8.8px;height:8.8px;box-sizing:border-box;border:1px solid #a8a8a8;border-radius:2px;background:#e9e9e9"></div>
<svg class="a" style="left:922.2px;top:543.2px;width:6.6px;height:6px" viewBox="121 334 1550 1188" preserveAspectRatio="none"><path fill="#222" d="M1671 566q0 40-28 68l-724 724-136 136q-28 28-68 28t-68-28l-136-136-362-362q-28-28-28-68t28-68l136-136q28-28 68-28t68 28l294 295 656-657q28-28 68-28t68 28l136 136q28 28 28 68z"/></svg>
<div class="a" style="left:966.7px;top:541.9px;width:8.8px;height:8.8px;box-sizing:border-box;border:1px solid #a8a8a8;border-radius:2px;background:#e9e9e9"></div>
<svg class="a" style="left:968.0px;top:543.2px;width:6.6px;height:6px" viewBox="121 334 1550 1188" preserveAspectRatio="none"><path fill="#222" d="M1671 566q0 40-28 68l-724 724-136 136q-28 28-68 28t-68-28l-136-136-362-362q-28-28-28-68t28-68l136-136q28-28 68-28t68 28l294 295 656-657q28-28 68-28t68 28l136 136q28 28 28 68z"/></svg>
<div class="a" style="left:1012.5px;top:541.9px;width:8.8px;height:8.8px;box-sizing:border-box;border:1px solid #a8a8a8;border-radius:2px;background:#e9e9e9"></div>
<svg class="a" style="left:1013.8px;top:543.2px;width:6.6px;height:6px" viewBox="121 334 1550 1188" preserveAspectRatio="none"><path fill="#222" d="M1671 566q0 40-28 68l-724 724-136 136q-28 28-68 28t-68-28l-136-136-362-362q-28-28-28-68t28-68l136-136q28-28 68-28t68 28l294 295 656-657q28-28 68-28t68 28l136 136q28 28 28 68z"/></svg>
<div class="a" style="left:1058.3px;top:541.9px;width:8.8px;height:8.8px;box-sizing:border-box;border:1px solid #a8a8a8;border-radius:2px;background:#e9e9e9"></div>
<svg class="a" style="left:1059.6px;top:543.2px;width:6.6px;height:6px" viewBox="121 334 1550 1188" preserveAspectRatio="none"><path fill="#222" d="M1671 566q0 40-28 68l-724 724-136 136q-28 28-68 28t-68-28l-136-136-362-362q-28-28-28-68t28-68l136-136q28-28 68-28t68 28l294 295 656-657q28-28 68-28t68 28l136 136q28 28 28 68z"/></svg>
<div class="a" style="left:1104.1px;top:541.9px;width:8.8px;height:8.8px;box-sizing:border-box;border:1px solid #a8a8a8;border-radius:2px;background:#e9e9e9"></div>
<svg class="a" style="left:1105.4px;top:543.2px;width:6.6px;height:6px" viewBox="121 334 1550 1188" preserveAspectRatio="none"><path fill="#222" d="M1671 566q0 40-28 68l-724 724-136 136q-28 28-68 28t-68-28l-136-136-362-362q-28-28-28-68t28-68l136-136q28-28 68-28t68 28l294 295 656-657q28-28 68-28t68 28l136 136q28 28 28 68z"/></svg>
<div class="a" style="left:1149.9px;top:541.9px;width:8.8px;height:8.8px;box-sizing:border-box;border:1px solid #a8a8a8;border-radius:2px;background:#e9e9e9"></div>
<svg class="a" style="left:1151.2px;top:543.2px;width:6.6px;height:6px" viewBox="121 334 1550 1188" preserveAspectRatio="none"><path fill="#222" d="M1671 566q0 40-28 68l-724 724-136 136q-28 28-68 28t-68-28l-136-136-362-362q-28-28-28-68t28-68l136-136q28-28 68-28t68 28l294 295 656-657q28-28 68-28t68 28l136 136q28 28 28 68z"/></svg>
<div class="a" style="left:1195.7px;top:541.9px;width:8.8px;height:8.8px;box-sizing:border-box;border:1px solid #a8a8a8;border-radius:2px;background:#e9e9e9"></div>
<svg class="a" style="left:1197.0px;top:543.2px;width:6.6px;height:6px" viewBox="121 334 1550 1188" preserveAspectRatio="none"><path fill="#222" d="M1671 566q0 40-28 68l-724 724-136 136q-28 28-68 28t-68-28l-136-136-362-362q-28-28-28-68t28-68l136-136q28-28 68-28t68 28l294 295 656-657q28-28 68-28t68 28l136 136q28 28 28 68z"/></svg>
<div class="a" style="left:1241.5px;top:541.9px;width:8.8px;height:8.8px;box-sizing:border-box;border:1px solid #a8a8a8;border-radius:2px;background:#e9e9e9"></div>
<svg class="a" style="left:1242.8px;top:543.2px;width:6.6px;height:6px" viewBox="121 334 1550 1188" preserveAspectRatio="none"><path fill="#222" d="M1671 566q0 40-28 68l-724 724-136 136q-28 28-68 28t-68-28l-136-136-362-362q-28-28-28-68t28-68l136-136q28-28 68-28t68 28l294 295 656-657q28-28 68-28t68 28l136 136q28 28 28 68z"/></svg>
<div class="a" style="left:587.5px;top:531.4px;width:104.3px;height:27px;border-radius:14px;background:#26a69a;box-shadow:0 0 14px 4px rgba(38,166,154,0.45)"></div>
<div class="t" style="left:587.5px;width:105px;text-align:center;top:539px;font-size:11.4px;letter-spacing:-0.2px;-webkit-text-stroke:0.4px #fff;color:#fff">Save</div>
<div class="a" style="left:30.5px;top:275px;width:1255.5px;height:36.2px;background:#888"></div>
<div class="a" style="left:57.5px;top:275px;width:1px;height:36.2px;background:#c2c2c2"></div>
<div class="a" style="left:150.0px;top:275px;width:1px;height:36.2px;background:#c2c2c2"></div>
<div class="a" style="left:324.0px;top:275px;width:1px;height:36.2px;background:#c2c2c2"></div>
<div class="a" style="left:490.0px;top:275px;width:1px;height:36.2px;background:#c2c2c2"></div>
<div class="a" style="left:582.0px;top:275px;width:1px;height:36.2px;background:#c2c2c2"></div>
<div class="a" style="left:674.0px;top:275px;width:1px;height:36.2px;background:#c2c2c2"></div>
<div class="a" style="left:766.0px;top:275px;width:1px;height:36.2px;background:#c2c2c2"></div>
<div class="a" style="left:858.0px;top:275px;width:1px;height:36.2px;background:#c2c2c2"></div>
<div class="a" style="left:904.0px;top:293.5px;width:1px;height:17.7px;background:#c2c2c2"></div>
<div class="a" style="left:950.0px;top:293.5px;width:1px;height:17.7px;background:#c2c2c2"></div>
<div class="a" style="left:996.0px;top:293.5px;width:1px;height:17.7px;background:#c2c2c2"></div>
<div class="a" style="left:1042.0px;top:293.5px;width:1px;height:17.7px;background:#c2c2c2"></div>
<div class="a" style="left:1088.0px;top:293.5px;width:1px;height:17.7px;background:#c2c2c2"></div>
<div class="a" style="left:1134.0px;top:293.5px;width:1px;height:17.7px;background:#c2c2c2"></div>
<div class="a" style="left:1180.0px;top:293.5px;width:1px;height:17.7px;background:#c2c2c2"></div>
<div class="a" style="left:1226.0px;top:293.5px;width:1px;height:17.7px;background:#c2c2c2"></div>
<div class="a" style="left:1272.0px;top:293.5px;width:1px;height:17.7px;background:#c2c2c2"></div>
<div class="a" style="left:858.5px;top:293px;width:427.5px;height:1px;background:#c2c2c2"></div>
<div class="a" style="left:39.7px;top:288.3px;width:8.3px;height:8.3px;background:#b4b4b4;border-radius:1px"></div>
<div class="th" style="left:58px;width:92.5px;top:288.7px"><span style="color:#f4516c;font-size:8px">*</span>Billing Code</div>
<div class="th" style="left:150.5px;width:174.0px;top:288.7px">Name(Eng.)</div>
<div class="th" style="left:324.5px;width:166.0px;top:288.7px">Name(Local)</div>
<div class="th" style="left:490.5px;width:92.0px;top:288.7px">Revenue</div>
<div class="th" style="left:582.5px;width:92.0px;top:288.7px">Cost</div>
<div class="th" style="left:674.5px;width:92.0px;top:288.7px">Credit</div>
<div class="th" style="left:766.5px;width:92.0px;top:288.7px">Debit</div>
<div class="th" style="left:858.5px;width:46.0px;top:296.5px;font-size:10.2px">A/R</div>
<div class="th" style="left:904.5px;width:46.0px;top:296.5px;font-size:10.2px">A/P</div>
<div class="th" style="left:950.5px;width:46.0px;top:296.5px;font-size:10.2px">D/C</div>
<div class="th" style="left:996.5px;width:46.0px;top:296.5px;font-size:10.2px">G&amp;A</div>
<div class="th" style="left:1042.5px;width:46.0px;top:296.5px;font-size:10.2px">O/IM</div>
<div class="th" style="left:1088.5px;width:46.0px;top:296.5px;font-size:10.2px">O/IH</div>
<div class="th" style="left:1134.5px;width:46.0px;top:296.5px;font-size:10.2px">A/IM</div>
<div class="th" style="left:1180.5px;width:46.0px;top:296.5px;font-size:10.2px">A/IH</div>
<div class="th" style="left:1226.5px;width:46.0px;top:296.5px;font-size:10.2px">O/EM</div>
<div class="th" style="left:1272.5px;width:46.0px;top:296.5px;font-size:10.2px">O/EH</div>
<div class="th" style="left:1151.5px;width:100px;top:279.2px;font-size:10.8px">Department</div>
<div class="a" style="left:1286px;top:270px;width:8px;height:300px;background:#fff"></div>
</div>
<div class="rr" style="left:0px;top:3px;width:282.5px;height:35.5px"></div>
<div class="rr" style="left:16px;top:188px;width:56px;height:47px"></div>
<div class="rr" style="left:24.2px;top:523.8px;width:465.8px;height:40.200000000000045px"></div>
<div class="rr" style="left:497.2px;top:527px;width:367.59999999999997px;height:40px"></div>
<div class="rr" style="left:872.2px;top:528.9px;width:424.79999999999995px;height:38.10000000000002px"></div>
<div class="circ" style="left:304.8px;top:4.800000000000001px">1</div>
<div class="circ" style="left:85px;top:196.9px">2</div>
<div class="circ" style="left:112.2px;top:493px">3</div>
<div class="circ" style="left:242.5px;top:493px">4</div>
<div class="circ" style="left:435px;top:493px">5</div>
<div class="circ" style="left:648.8px;top:493px">6</div>
<div class="circ" style="left:1096px;top:492.8px">7</div>
</body></html>
